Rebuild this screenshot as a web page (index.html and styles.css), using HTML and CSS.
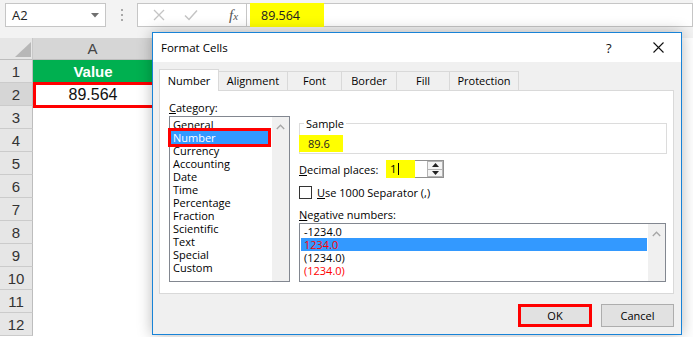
FILE: index.html
```html
<!DOCTYPE html>
<html>
<head>
<meta charset="utf-8">
<link rel="stylesheet" href="styles.css">
</head>
<body>
<div class="toolbar">
  <div class="namebox"><span>A2</span><svg class="dd" width="8" height="5" viewBox="0 0 8 5"><path d="M0 0H8L4 4.5Z" fill="#707070"/></svg></div>
  <div class="dots"><i></i><i></i><i></i></div>
  <div class="fxbox">
    <svg class="ico" width="12" height="12" viewBox="0 0 12 12"><path d="M1 1L11 11M11 1L1 11" stroke="#c4c4c4" stroke-width="1.3" fill="none"/></svg>
    <svg class="ico" width="14" height="12" viewBox="0 0 14 12"><path d="M1 6.5L5 10.5L13 1.5" stroke="#c4c4c4" stroke-width="1.5" fill="none"/></svg>
    <span class="fx">f<span class="fxx">x</span></span>
  </div>
  <div class="formula"><span class="fval">89.564</span></div>
</div>

<div class="sheet">
  <div class="corner"><svg width="33" height="22" viewBox="0 0 33 22"><path d="M31 4V19H15Z" fill="#b7b7b7"/></svg></div>
  <div class="colhdr sel">A</div>
  <div class="colhdr"></div>
  <div class="colhdr"></div>
  <div class="colhdr"></div>
  <div class="colhdr"></div>
  <div class="colhdr"></div>
  <div class="colhdr"></div>

  <div class="rowhdr">1</div><div class="cell value">Value</div><div class="cell"></div><div class="cell"></div><div class="cell"></div><div class="cell"></div><div class="cell"></div><div class="cell"></div>
  <div class="rowhdr sel">2</div><div class="cell active">89.564</div><div class="cell"></div><div class="cell"></div><div class="cell"></div><div class="cell"></div><div class="cell"></div><div class="cell"></div>
  <div class="rowhdr">3</div><div class="cell"></div><div class="cell"></div><div class="cell"></div><div class="cell"></div><div class="cell"></div><div class="cell"></div><div class="cell"></div>
  <div class="rowhdr">4</div><div class="cell"></div><div class="cell"></div><div class="cell"></div><div class="cell"></div><div class="cell"></div><div class="cell"></div><div class="cell"></div>
  <div class="rowhdr">5</div><div class="cell"></div><div class="cell"></div><div class="cell"></div><div class="cell"></div><div class="cell"></div><div class="cell"></div><div class="cell"></div>
  <div class="rowhdr">6</div><div class="cell"></div><div class="cell"></div><div class="cell"></div><div class="cell"></div><div class="cell"></div><div class="cell"></div><div class="cell"></div>
  <div class="rowhdr">7</div><div class="cell"></div><div class="cell"></div><div class="cell"></div><div class="cell"></div><div class="cell"></div><div class="cell"></div><div class="cell"></div>
  <div class="rowhdr">8</div><div class="cell"></div><div class="cell"></div><div class="cell"></div><div class="cell"></div><div class="cell"></div><div class="cell"></div><div class="cell"></div>
  <div class="rowhdr">9</div><div class="cell"></div><div class="cell"></div><div class="cell"></div><div class="cell"></div><div class="cell"></div><div class="cell"></div><div class="cell"></div>
  <div class="rowhdr">10</div><div class="cell"></div><div class="cell"></div><div class="cell"></div><div class="cell"></div><div class="cell"></div><div class="cell"></div><div class="cell"></div>
  <div class="rowhdr">11</div><div class="cell"></div><div class="cell"></div><div class="cell"></div><div class="cell"></div><div class="cell"></div><div class="cell"></div><div class="cell"></div>
  <div class="rowhdr">12</div><div class="cell"></div><div class="cell"></div><div class="cell"></div><div class="cell"></div><div class="cell"></div><div class="cell"></div><div class="cell"></div>
</div>

<div class="dialog">
  <div class="titlebar">
    <span class="title">Format Cells</span>
    <span class="help">?</span>
    <svg class="close" width="11" height="11" viewBox="0 0 11 11"><path d="M0.5 0.5L10.5 10.5M10.5 0.5L0.5 10.5" stroke="#111" stroke-width="1.1" fill="none"/></svg>
  </div>
  <div class="dbody">
    <div class="tabs">
      <div class="tab active w1">Number</div>
      <div class="tab w2">Alignment</div>
      <div class="tab w3">Font</div>
      <div class="tab w4">Border</div>
      <div class="tab w5">Fill</div>
      <div class="tab w6">Protection</div>
    </div>
    <div class="panel">
      <div class="leftcol">
        <div class="lbl"><u>C</u>ategory:</div>
        <div class="listbox cat">
          <ul class="items">
            <li>General</li>
            <li class="selected boxed">Number</li>
            <li>Currency</li>
            <li>Accounting</li>
            <li>Date</li>
            <li>Time</li>
            <li>Percentage</li>
            <li>Fraction</li>
            <li>Scientific</li>
            <li>Text</li>
            <li>Special</li>
            <li>Custom</li>
          </ul>
          <div class="vscroll"><svg width="9" height="6" viewBox="0 0 9 6"><path d="M0.8 5L4.5 1.2L8.2 5" stroke="#a6a6a6" stroke-width="1.3" fill="none"/></svg></div>
        </div>
      </div>
      <div class="rightcol">
        <fieldset class="sample"><legend>Sample</legend><div class="sval">89.6</div></fieldset>
        <div class="decrow">
          <span class="declbl"><u>D</u>ecimal places:</span>
          <div class="spin">
            <span class="spinval">1<i class="caret"></i></span>
            <div class="spinbtns">
              <span class="sb"><svg width="7" height="4" viewBox="0 0 7 4"><path d="M0 4H7L3.5 0Z" fill="#222"/></svg></span>
              <span class="sb"><svg width="7" height="4" viewBox="0 0 7 4"><path d="M0 0H7L3.5 4Z" fill="#222"/></svg></span>
            </div>
          </div>
        </div>
        <div class="chkrow"><span class="chk"></span><span><u>U</u>se 1000 Separator (,)</span></div>
        <div class="lbl neglbl"><u>N</u>egative numbers:</div>
        <div class="listbox neg">
          <ul class="items">
            <li>-1234.0</li>
            <li class="selected red">1234.0</li>
            <li>(1234.0)</li>
            <li class="red">(1234.0)</li>
          </ul>
          <div class="vscroll"><svg width="9" height="6" viewBox="0 0 9 6"><path d="M0.8 5L4.5 1.2L8.2 5" stroke="#a6a6a6" stroke-width="1.3" fill="none"/></svg></div>
        </div>
      </div>
    </div>
    <div class="buttons">
      <button class="btn ok">OK</button>
      <button class="btn">Cancel</button>
    </div>
  </div>
</div>
</body>
</html>
```

FILE: styles.css
```css
* { box-sizing: border-box; margin: 0; padding: 0; }
html, body { width: 693px; height: 337px; overflow: hidden; }
body {
  position: relative;
  background: #fff;
  font-family: "Open Sans", "Noto Sans", sans-serif;
  color: #000;
}

/* ---------- formula bar ---------- */
.toolbar {
  height: 38px;
  background: #f3f3f3;
  display: flex;
  align-items: flex-start;
  padding: 3px 0 0 5px;
}
.namebox {
  width: 101px;
  height: 24px;
  background: #fff;
  border: 1px solid #c6c6c6;
  display: flex;
  align-items: center;
  justify-content: space-between;
  padding: 0 6px 0 6px;
  font-size: 13px;
  color: #222;
}
.dots {
  width: 31px;
  height: 24px;
  display: flex;
  flex-direction: column;
  align-items: center;
  justify-content: center;
  gap: 3px;
}
.dots i { display: block; width: 2px; height: 2px; background: #a8a8a8; }
.fxbox {
  width: 110px;
  height: 24px;
  background: #fff;
  border: 1px solid #c6c6c6;
  display: flex;
  align-items: center;
  padding-left: 15px;
  gap: 19px;
}
.fx {
  font-family: "Liberation Serif", serif;
  font-style: italic;
  font-size: 15px;
  color: #555;
  margin-left: 12px;
}
.fxx { font-size: 11px; }
.formula {
  flex: 1;
  height: 24px;
  background: #fff;
  border: 1px solid #c6c6c6;
  border-left: none;
  padding-left: 3px;
  display: flex;
}
.fval {
  display: flex;
  align-items: center;
  width: 74px;
  height: 24px;
  margin-top: -1px;
  background: #ffff00;
  padding-left: 11px;
  font-size: 12.5px;
  color: #222;
}

/* ---------- sheet ---------- */
.sheet {
  display: grid;
  grid-template-columns: 33px 120px 64px 64px 64px 64px 64px 64px;
  grid-template-rows: 22px;
  grid-auto-rows: 23px;
  font-family: "Liberation Sans", Arial, sans-serif;
}
.corner { background: #e6e6e6; border-right: 1px solid #c8c8c8; border-bottom: 1px solid #bdbdbd; }
.corner svg { display: block; }
.colhdr {
  background: #e6e6e6;
  border-right: 1px solid #c8c8c8;
  border-bottom: 1px solid #bdbdbd;
  display: flex; align-items: center; justify-content: center;
  font-size: 15px; color: #444;
}
.colhdr.sel { background: #d6d6d6; }
.rowhdr {
  background: #e6e6e6;
  border-right: 1px solid #bdbdbd;
  border-bottom: 1px solid #cbcbcb;
  display: flex; align-items: center; justify-content: center;
  font-size: 15px; color: #333;
}
.rowhdr.sel { background: #d6d6d6; }
.cell { background: #fff; display: flex; align-items: center; justify-content: center; }
.cell.value {
  background: #00b050;
  color: #fff;
  font-weight: bold;
  font-size: 15px;
}
.cell.active { position: relative; font-size: 16px; color: #111; }
.cell.active::after {
  content: "";
  position: absolute;
  left: 0; right: -2px; top: -1px; bottom: -2px;
  border: 3px solid #ff0000;
}

/* ---------- dialog ---------- */
.dialog {
  position: absolute;
  left: 152px;
  top: 32px;
  width: 530px;
  height: 303px;
  border: 1px solid #1883d7;
  background: #f0f0f0;
  box-shadow: 0 0 14px rgba(0,0,0,0.28);
  font-size: 11px;
  display: flex;
  flex-direction: column;
}
.titlebar {
  height: 29px;
  background: #fff;
  display: flex;
  align-items: center;
  padding-left: 8px;
}
.title { font-size: 11.5px; color: #000; flex: 1; }
.help { font-size: 13px; width: 8px; margin-right: 39px; color: #111; }
.close { margin-right: 17px; display: block; }

.dbody { padding: 7px 7px 0 6px; }
.tabs { display: flex; align-items: flex-end; height: 21px; }
.tab {
  height: 19px;
  border: 1px solid #d9d9d9;
  border-bottom: none;
  background: #f0f0f0;
  display: flex; align-items: center; justify-content: center;
  margin-left: -1px;
  padding-bottom: 1px;
}
.tab.active {
  height: 22px;
  margin-left: 0;
  margin-bottom: -1px;
  background: #fff;
  position: relative;
  z-index: 1;
  padding-bottom: 0;
}
.w1 { width: 60px; }
.w2 { width: 70px; }
.w3 { width: 55px; }
.w4 { width: 56px; }
.w5 { width: 54px; }
.w6 { width: 70px; }

.panel {
  height: 204px;
  background: #fff;
  border: 1px solid #d9d9d9;
  padding: 9px 6px 0 9px;
  display: flex;
  gap: 9px;
}
.lbl { line-height: 15px; height: 15px; white-space: nowrap; }
.leftcol { width: 121px; }
.listbox {
  border: 1px solid #828790;
  background: #fff;
  display: flex;
}
.listbox.cat { margin-top: 1px; height: 166px; }
.items { list-style: none; flex: 1; padding-top: 1px; }
.items li { height: 13px; line-height: 13px; white-space: nowrap; }
.cat .items li { padding-left: 2px; margin-left: 1px; }
.cat .items li.selected { margin-right: 4px; }
.items li.selected { background: #3399ff; color: #fff; }
.items li.boxed { outline: 3px solid #ff0000; }
.vscroll {
  width: 17px;
  background: #f0f0f0;
  display: flex;
  justify-content: center;
  padding-top: 7px;
}
.vscroll svg { display: block; }

.rightcol { flex: 1; }
.sample {
  margin-top: 16px;
  border: 1px solid #dcdcdc;
  height: 38px;
  padding: 0;
}
.sample legend { margin-left: 4px; padding: 0 2px; line-height: 15px; }
.sval {
  margin: 4px 0 0 -1px;
  width: 44px;
  height: 17px;
  background: #ffff00;
  padding-left: 9px;
  line-height: 17px;
  color: #222;
}
.decrow { display: flex; align-items: center; height: 18px; margin-top: 6px; }
.declbl { width: 87px; }
.spin {
  width: 58px;
  height: 18px;
  border: 1px solid #8f8f8f;
  background: #fff;
  display: flex;
}
.spinval {
  width: 29px;
  margin: -1px 0 -1px -1px;
  background: #ffff00;
  padding-left: 4px;
  line-height: 18px;
  font-size: 11.5px;
  display: flex;
  align-items: center;
}
.caret { display: block; width: 1px; height: 12px; background: #000; margin-left: 1px; }
.spinbtns {
  margin-left: 12px;
  width: 16px;
  display: flex;
  flex-direction: column;
}
.sb {
  flex: 1;
  border: 1px solid #b4b4b4;
  background: #f4f4f4;
  display: flex; align-items: center; justify-content: center;
}
.sb + .sb { border-top: none; }
.sb svg { display: block; }

.chkrow { display: flex; align-items: center; margin-top: 8px; height: 13px; gap: 5px; }
.chk { width: 13px; height: 13px; border: 1px solid #333; background: #fff; }
.neglbl { margin-top: 8px; }
.listbox.neg { margin-top: 1px; height: 59px; width: 367px; }
.neg .items { padding-top: 1px; }
.neg .items li { margin: 0 1px; padding-left: 3px; }
.items li.red { color: #ff0000; }

.buttons {
  display: flex;
  justify-content: flex-end;
  gap: 9px;
  margin-top: 10px;
}
.btn {
  width: 73px;
  height: 23px;
  border: 1px solid #adadad;
  background: #e1e1e1;
  font-family: "Open Sans", "Noto Sans", sans-serif;
  font-size: 11px;
  color: #000;
}
.btn.ok { width: 74px; border: 3px solid #ff0000; }
```
